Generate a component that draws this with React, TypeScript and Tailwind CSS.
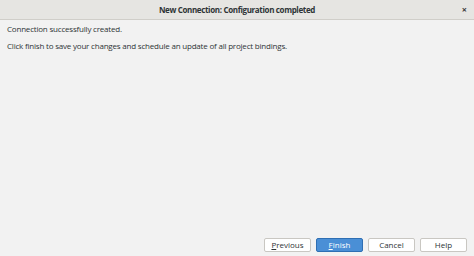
import React from "react";

const btn =
  "h-[14px] w-[47px] flex items-center justify-center rounded-[2px] border text-[8px] leading-none";

export default function App() {
  return (
    <div
      className="w-[474px] h-[256px] flex flex-col bg-[#f2f2f2] text-[#2e3436]"
      style={{ fontFamily: '"Open Sans", "Noto Sans", sans-serif' }}
    >
      <div className="h-[20px] shrink-0 relative flex items-center justify-center bg-[#e6e5e2] border-b border-[#d0cec9]">
        <span className="text-[8px] font-bold tracking-[-0.35px] text-[#2e3436]">New Connection: Configuration completed</span>
        <span className="absolute right-[7px] top-[5px] text-[9px] font-bold leading-none text-[#3a3a3a]">×</span>
      </div>
      <div className="flex-1 flex flex-col px-[7px] pt-0 text-[8px] leading-[17px] tracking-[-0.2px]">
        <div>Connection successfully created.</div>
        <div>Click finish to save your changes and schedule an update of all project bindings.</div>
      </div>
      <div className="flex justify-end gap-[5px] pr-[7px] pb-[4px]">
        <button className={btn + " bg-white border-[#c9c7c2] text-[#2e3436]"}>
          <span><u>P</u>revious</span>
        </button>
        <button className={btn + " bg-[#4a8fd6] border-[#2f6fb3] text-white"}>
          <span><u>F</u>inish</span>
        </button>
        <button className={btn + " bg-white border-[#c9c7c2] text-[#2e3436]"}>Cancel</button>
        <button className={btn + " bg-white border-[#c9c7c2] text-[#2e3436]"}>Help</button>
      </div>
    </div>
  );
}
